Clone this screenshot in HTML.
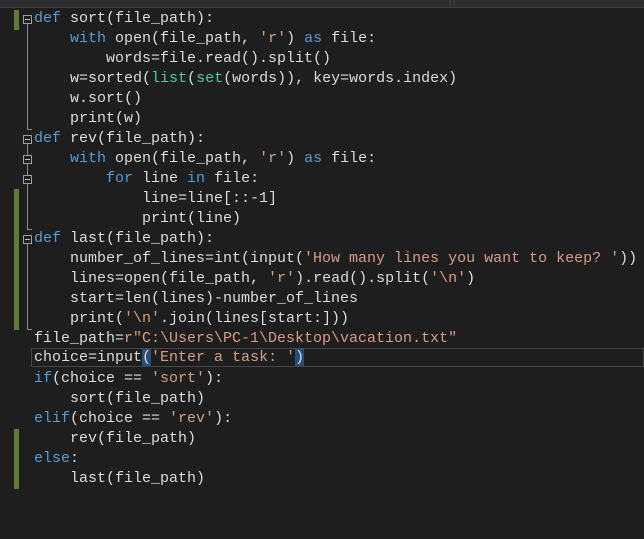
<!DOCTYPE html>
<html><head><style>
body{margin:0;width:644px;height:539px;background:#1e1e1e;overflow:hidden;position:relative;font-family:"Liberation Mono","DejaVu Sans Mono",monospace;font-size:15px;color:#dcdcdc}
.top{position:absolute;left:0;top:0;width:644px;height:7px;background:#2d2d30;border-bottom:1px solid #3f3f46}
.top .d{position:absolute;left:450px;top:0;width:1px;height:7px;background:#3f3f46}
.top .d2{position:absolute;left:454px;top:0;width:1px;height:7px;background:#3f3f46}
.l{position:absolute;left:34px;height:20px;line-height:20px;white-space:pre}
.k{color:#569cd6}.s{color:#d69d85}.b{color:#4ec9b0}
.g{position:absolute;left:14px;width:5px;background:#5b7d35}
.box{position:absolute;z-index:2;background:#1e1e1e;left:23px;width:7px;height:7px;border:1px solid #a0a0a0;box-sizing:content-box}
.box:after{content:"";position:absolute;left:1px;top:3px;width:5px;height:1px;background:#c0c0c0}
.v{position:absolute;left:27px;width:1px;background:#8a8a8a}
.t{position:absolute;left:27px;width:5px;height:1px;background:#8a8a8a}
.cur{position:absolute;left:31px;top:348px;width:613px;height:19px;border:1px solid #464646;box-sizing:border-box}
.br{background:#264f78}
</style></head><body>
<div class="top"><div class="d"></div><div class="d2"></div></div>
<div class="g" style="top:10px;height:20px"></div>
<div class="g" style="top:189px;height:141px"></div>
<div class="g" style="top:429px;height:60px"></div>
<div class="box" style="top:15px"></div><div class="v" style="top:24px;height:105px"></div><div class="t" style="top:129px"></div>
<div class="box" style="top:135px"></div>
<div class="box" style="top:155px"></div>
<div class="box" style="top:175px"></div><div class="v" style="top:144px;height:85px"></div><div class="t" style="top:229px"></div>
<div class="box" style="top:235px"></div><div class="v" style="top:244px;height:86px"></div><div class="t" style="top:329px"></div>
<div class="cur"></div>
<div class="l" style="top:9px"><span class="k">def</span> sort(file_path):</div>
<div class="l" style="top:29px">    <span class="k">with</span> open(file_path, <span class="s">'r'</span>) <span class="k">as</span> file:</div>
<div class="l" style="top:49px">        words=file.read().split()</div>
<div class="l" style="top:69px">    w=sorted(<span class="b">list</span>(<span class="b">set</span>(words)), key=words.index)</div>
<div class="l" style="top:89px">    w.sort()</div>
<div class="l" style="top:109px">    print(w)</div>
<div class="l" style="top:129px"><span class="k">def</span> rev(file_path):</div>
<div class="l" style="top:149px">    <span class="k">with</span> open(file_path, <span class="s">'r'</span>) <span class="k">as</span> file:</div>
<div class="l" style="top:169px">        <span class="k">for</span> line <span class="k">in</span> file:</div>
<div class="l" style="top:189px">            line=line[::-1]</div>
<div class="l" style="top:209px">            print(line)</div>
<div class="l" style="top:229px"><span class="k">def</span> last(file_path):</div>
<div class="l" style="top:249px">    number_of_lines=int(input(<span class="s">'How many lines you want to keep? '</span>))</div>
<div class="l" style="top:269px">    lines=open(file_path, <span class="s">'r'</span>).read().split(<span class="s">'\n'</span>)</div>
<div class="l" style="top:289px">    start=len(lines)-number_of_lines</div>
<div class="l" style="top:309px">    print(<span class="s">'\n'</span>.join(lines[start:]))</div>
<div class="l" style="top:329px">file_path=<span class="s">r"C:\Users\PC-1\Desktop\vacation.txt"</span></div>
<div class="l" style="top:348px">choice=input<span class="br">(</span><span class="s">'Enter a task: '</span><span class="br">)</span></div>
<div class="l" style="top:369px"><span class="k">if</span>(choice == <span class="s">'sort'</span>):</div>
<div class="l" style="top:389px">    sort(file_path)</div>
<div class="l" style="top:409px"><span class="k">elif</span>(choice == <span class="s">'rev'</span>):</div>
<div class="l" style="top:429px">    rev(file_path)</div>
<div class="l" style="top:449px"><span class="k">else</span>:</div>
<div class="l" style="top:469px">    last(file_path)</div>
</body></html>
